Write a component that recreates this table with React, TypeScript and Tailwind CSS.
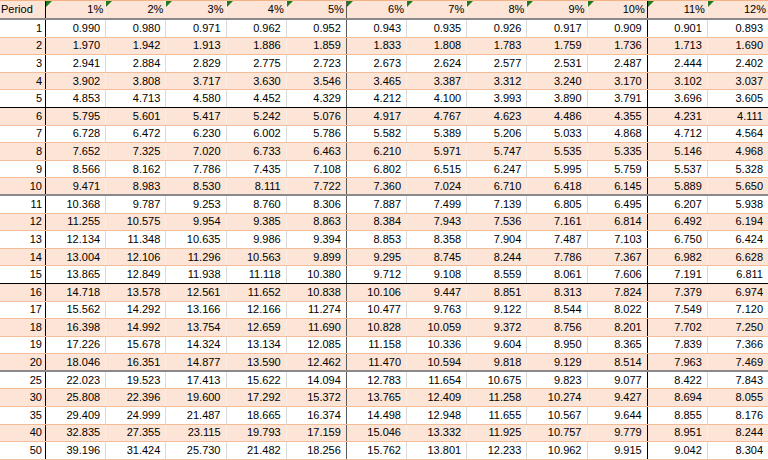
const rates = [1, 2, 3, 4, 5, 6, 7, 8, 9, 10, 11, 12]
const periods = [1, 2, 3, 4, 5, 6, 7, 8, 9, 10, 11, 12, 13, 14, 15, 16, 17, 18, 19, 20, 25, 30, 35, 40, 50]

// present value of an annuity of 1 per period
const pvAnnuity = (r: number, n: number) => ((1 - Math.pow(1 + r / 100, -n)) / (r / 100)).toFixed(3)

// heavier rule under these periods
const rowRule: Record<number, string> = {
  5: 'border-b border-b-black',
  10: 'border-b-2 border-b-[#8a8a8a]',
  15: 'border-b border-b-black',
  20: 'border-b-2 border-b-[#8a8a8a]',
}

function colBorder(i: number, shaded: boolean) {
  if (i === 0) return 'border-r border-r-black'
  if (i === 5) return 'border-r border-r-[#5a5a5a]'
  if (i === 10) return 'border-r border-r-black'
  if (i === 12) return ''
  return shaded ? 'border-r border-r-[#fbeee5]' : 'border-r border-r-[#dadada]'
}

function Header() {
  return (
    <div className="grid h-[20px] grid-cols-[46px_repeat(12,minmax(0,1fr))] border-t border-t-[#f4b183] border-b-2 border-b-[#8a8a8a] bg-[#fce4d6]">
      <div className={`flex items-center pl-[1px] ${colBorder(0, true)}`}>Period</div>
      {rates.map((r, i) => (
        <div key={r} className={`relative flex items-center justify-end pr-[2px] ${colBorder(i + 1, true)}`}>
          <span className="absolute left-0 top-0 h-0 w-0 border-t-[6px] border-r-[6px] border-t-[#1f7a1f] border-r-transparent" />
          {r}%
        </div>
      ))}
    </div>
  )
}

function Row({ n, shaded }: { n: number; shaded: boolean }) {
  const rule = rowRule[n] ?? 'border-b border-b-[#f4bd99]'
  return (
    <div
      className={`grid h-[17.6px] grid-cols-[46px_repeat(12,minmax(0,1fr))] ${rule} ${
        shaded ? 'bg-[#fce4d6]' : 'bg-white'
      }`}
    >
      <div className={`flex items-center justify-end pr-[3px] ${colBorder(0, shaded)}`}>{n}</div>
      {rates.map((r, i) => (
        <div key={r} className={`flex items-center justify-end pr-[5px] ${colBorder(i + 1, shaded)}`}>
          {pvAnnuity(r, n)}
        </div>
      ))}
    </div>
  )
}

export default function App() {
  return (
    <div className="h-[460px] w-[768px] overflow-hidden bg-white font-['Liberation_Sans',Arial,sans-serif] text-[11px] leading-none text-black">
      <Header />
      {periods.map((n, idx) => (
        <Row key={n} n={n} shaded={idx % 2 === 1} />
      ))}
    </div>
  )
}
